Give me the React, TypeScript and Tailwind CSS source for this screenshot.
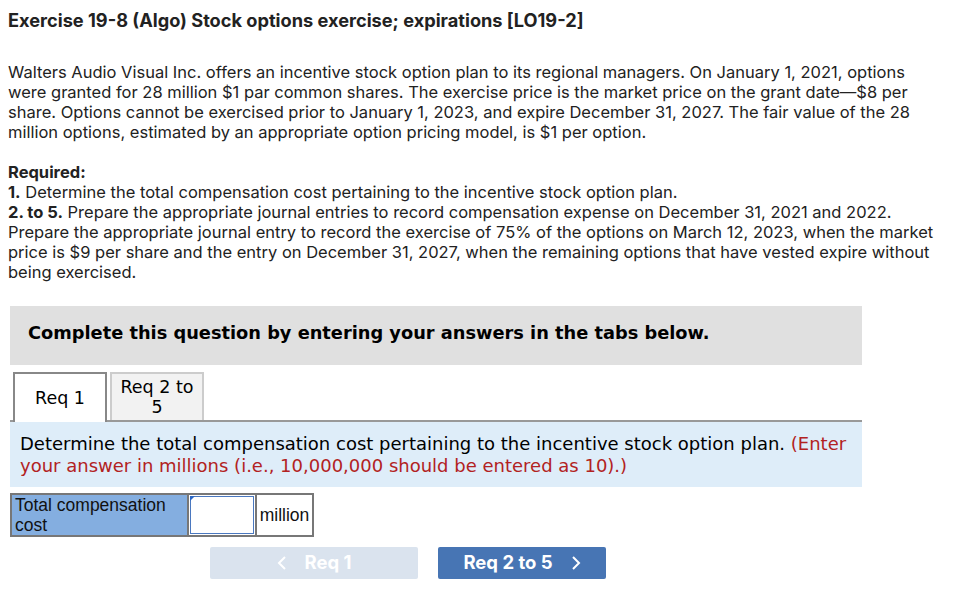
import React from "react";

const sans = { fontFamily: "Inter, 'Open Sans', Lato, sans-serif" };

export default function App() {
  return (
    <div className="w-[966px] h-[614px] bg-white text-[#222] overflow-hidden" style={sans}>
      <div className="pl-[8px] pt-[9px]">
        <h1 className="text-[18.2px] leading-[22px] font-bold text-[#222] whitespace-nowrap">
          Exercise 19-8 (Algo) Stock options exercise; expirations [LO19-2]
        </h1>
        <p className="mt-[31px] text-[16.5px] leading-[20px] whitespace-nowrap">
          Walters Audio Visual Inc. offers an incentive stock option plan to its regional managers. On January 1, 2021, options<br />
          were granted for 28 million $1 par common shares. The exercise price is the market price on the grant date—$8 per<br />
          share. Options cannot be exercised prior to January 1, 2023, and expire December 31, 2027. The fair value of the 28<br />
          million options, estimated by an appropriate option pricing model, is $1 per option.
        </p>
        <div className="mt-[20px] text-[16.5px] leading-[20px] whitespace-nowrap">
          <div className="font-bold">Required:</div>
          <div><b>1.</b> Determine the total compensation cost pertaining to the incentive stock option plan.</div>
          <div><b>2. to 5.</b> Prepare the appropriate journal entries to record compensation expense on December 31, 2021 and 2022.</div>
          <div>Prepare the appropriate journal entry to record the exercise of 75% of the options on March 12, 2023, when the market</div>
          <div>price is $9 per share and the entry on December 31, 2027, when the remaining options that have vested expire without</div>
          <div>being exercised.</div>
        </div>
      </div>

      <div className="ml-[10px] w-[852px] mt-[24px]" style={{ fontFamily: "'DejaVu Sans', Verdana, sans-serif" }}>
        <div className="h-[59px] bg-[#e0e0e0] flex items-center pl-[18px] pb-[4px]">
          <span className="text-[17.8px] font-bold text-black whitespace-nowrap">
            Complete this question by entering your answers in the tabs below.
          </span>
        </div>

        <div className="mt-[7px] flex items-end gap-[3px] pl-[3px] border-b-2 border-[#999]">
          <div className="w-[94px] h-[50px] border-2 border-b-0 border-[#888] bg-white flex items-center justify-center text-[17.5px] text-black -mb-[2px] relative z-10">
            Req 1
          </div>
          <div className="w-[94px] h-[48px] border-2 border-b-0 border-[#ccc] bg-[#f2f2f2] flex flex-col items-center justify-center text-[17.5px] leading-[20px] text-black">
            <span>Req 2 to</span>
            <span>5</span>
          </div>
        </div>

        <div className="bg-[#deedf9] h-[65px] pl-[10px] pt-[11px] text-[18px] leading-[22px] text-black whitespace-nowrap">
          Determine the total compensation cost pertaining to the incentive stock option plan. <span className="text-[#b22222]">(Enter</span><br />
          <span className="text-[#b22222]">your answer in millions (i.e., 10,000,000 should be entered as 10).)</span>
        </div>

        <div className="mt-[6px] flex w-[304px] h-[44px] border-2 border-[#777] bg-[#777] gap-[2px]" style={{ fontFamily: "'Liberation Sans', Arial, sans-serif" }}>
          <div className="w-[175px] bg-[#84aee0] text-[17.5px] leading-[20px] text-[#111] pl-[3px]">
            Total compensation<br />cost
          </div>
          <div className="w-[66px] bg-white p-[1px] relative">
            <div className="w-full h-full border border-[#4a78c0] bg-white"></div>
            <svg className="absolute left-[1px] top-[1px]" width="5" height="5" viewBox="0 0 5 5"><path d="M0 0H5L0 5Z" fill="#2a66c4" /></svg>
          </div>
          <div className="flex-1 bg-white flex items-center justify-center text-[17.5px] text-[#111]">million</div>
        </div>

        <div className="mt-[10px] flex gap-[20px] pl-[200px]" style={sans}>
          <div className="w-[208px] h-[32px] bg-[#dae3ee] rounded-[2px] flex items-center justify-center gap-[18px] text-white font-bold text-[18.5px]">
            <svg width="10" height="16" viewBox="0 0 10 16"><path d="M8 2L2 8l6 6" stroke="white" strokeWidth="2" fill="none" /></svg>
            <span>Req 1</span>
          </div>
          <div className="w-[168px] h-[32px] bg-[#4775b4] rounded-[2px] flex items-center justify-center gap-[18px] text-white font-bold text-[18.5px]">
            <span>Req 2 to 5</span>
            <svg width="10" height="16" viewBox="0 0 10 16"><path d="M2 2l6 6-6 6" stroke="white" strokeWidth="2" fill="none" /></svg>
          </div>
        </div>
      </div>
    </div>
  );
}
